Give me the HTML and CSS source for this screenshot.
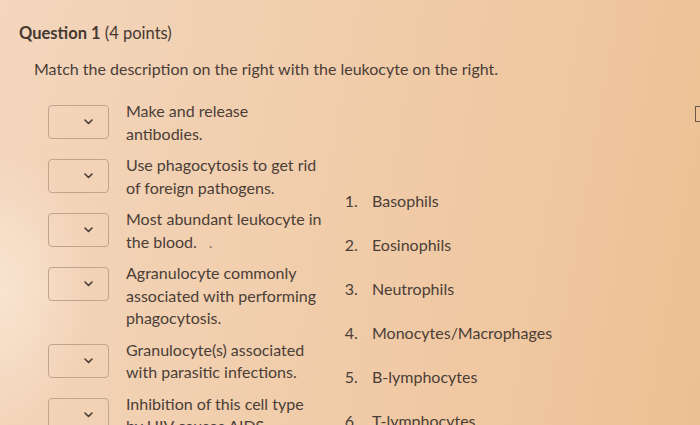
FILE: index.html
```html
<!DOCTYPE html>
<html>
<head>
  <meta charset="UTF-8">
  <title>Question 1</title>
  <link rel="stylesheet" href="styles.css">
</head>
<body>
  <div class="question">
    <div class="title"><b>Question 1</b> (4 points)</div>

    <div class="prompt">Match the description on the right with the leukocyte on the right.</div>

    <div class="match">
      <div class="items">
        <div class="item">
          <div class="select"><svg width="9" height="6" viewBox="0 0 9 6"><polyline points="1,1 4.5,4.5 8,1"/></svg></div>
          <div class="desc">Make and release<br>antibodies.</div>
        </div>
        <div class="item">
          <div class="select"><svg width="9" height="6" viewBox="0 0 9 6"><polyline points="1,1 4.5,4.5 8,1"/></svg></div>
          <div class="desc">Use phagocytosis to get rid<br>of foreign pathogens.</div>
        </div>
        <div class="item">
          <div class="select"><svg width="9" height="6" viewBox="0 0 9 6"><polyline points="1,1 4.5,4.5 8,1"/></svg></div>
          <div class="desc">Most abundant leukocyte in<br>the blood.<span class="speck">.</span></div>
        </div>
        <div class="item">
          <div class="select"><svg width="9" height="6" viewBox="0 0 9 6"><polyline points="1,1 4.5,4.5 8,1"/></svg></div>
          <div class="desc">Agranulocyte commonly<br>associated with performing<br>phagocytosis.</div>
        </div>
        <div class="item">
          <div class="select"><svg width="9" height="6" viewBox="0 0 9 6"><polyline points="1,1 4.5,4.5 8,1"/></svg></div>
          <div class="desc">Granulocyte(s) associated<br>with parasitic infections.</div>
        </div>
        <div class="item">
          <div class="select"><svg width="9" height="6" viewBox="0 0 9 6"><polyline points="1,1 4.5,4.5 8,1"/></svg></div>
          <div class="desc">Inhibition of this cell type<br>by HIV causes AIDS.</div>
        </div>
      </div>

      <ol class="choices">
        <li>Basophils</li>
        <li>Eosinophils</li>
        <li>Neutrophils</li>
        <li>Monocytes/Macrophages</li>
        <li>B-lymphocytes</li>
        <li>T-lymphocytes</li>
      </ol>
    </div>
  </div>

  <div class="side-tab"></div>
</body>
</html>
```

FILE: styles.css
```css
html, body {
  height: 100%;
}

body {
  margin: 0;
  overflow: hidden;
  font-family: Lato, "Open Sans", sans-serif;
  color: #4b3e37;
  background:
    radial-gradient(ellipse 90px 140px at 0 290px, rgba(250, 232, 214, 0.8), rgba(250, 232, 214, 0)),
    linear-gradient(100deg, #f3d6bd 0%, #f1cead 40%, #efc7a0 75%, #ebc093 100%);
}

.question {
  padding: 21px 0 0 19px;
}

.title {
  font-size: 16.5px;
  line-height: 24px;
  color: #463831;
}

.title b {
  font-weight: 700;
}

.prompt {
  margin: 13px 0 0 15px;
  font-size: 16px;
  line-height: 22px;
}

.match {
  display: flex;
  margin-top: 20px;
}

.items {
  display: flex;
  flex-direction: column;
  gap: 9px;
  margin-left: 29px;
}

.item {
  display: flex;
  align-items: flex-start;
}

/* closed dropdown, arrow sits near the right edge */
.select {
  width: 44px;
  height: 32px;
  margin-top: 5px;
  padding-right: 15px;
  border: 1px solid #bea68e;
  border-radius: 4px;
  display: flex;
  align-items: center;
  justify-content: flex-end;
  flex-shrink: 0;
}

.select svg {
  fill: none;
  stroke: #4a3b33;
  stroke-width: 1.6;
  stroke-linecap: round;
  stroke-linejoin: round;
}

.desc {
  width: 200px;
  margin-left: 17px;
  font-size: 16px;
  line-height: 22.5px;
  white-space: nowrap;
}

.speck {
  margin-left: 12px;
  color: #8c7a6c;
}

.choices {
  margin: 90px 0 0 10px;
  padding: 0 0 0 26px;
  font-size: 16px;
  line-height: 22px;
}

.choices li {
  margin-bottom: 22px;
  padding-left: 10px;
}

.side-tab {
  position: absolute;
  top: 106px;
  right: -4px;
  width: 8px;
  height: 14px;
  border: 1.5px solid #6a5848;
  border-right: none;
}
```
